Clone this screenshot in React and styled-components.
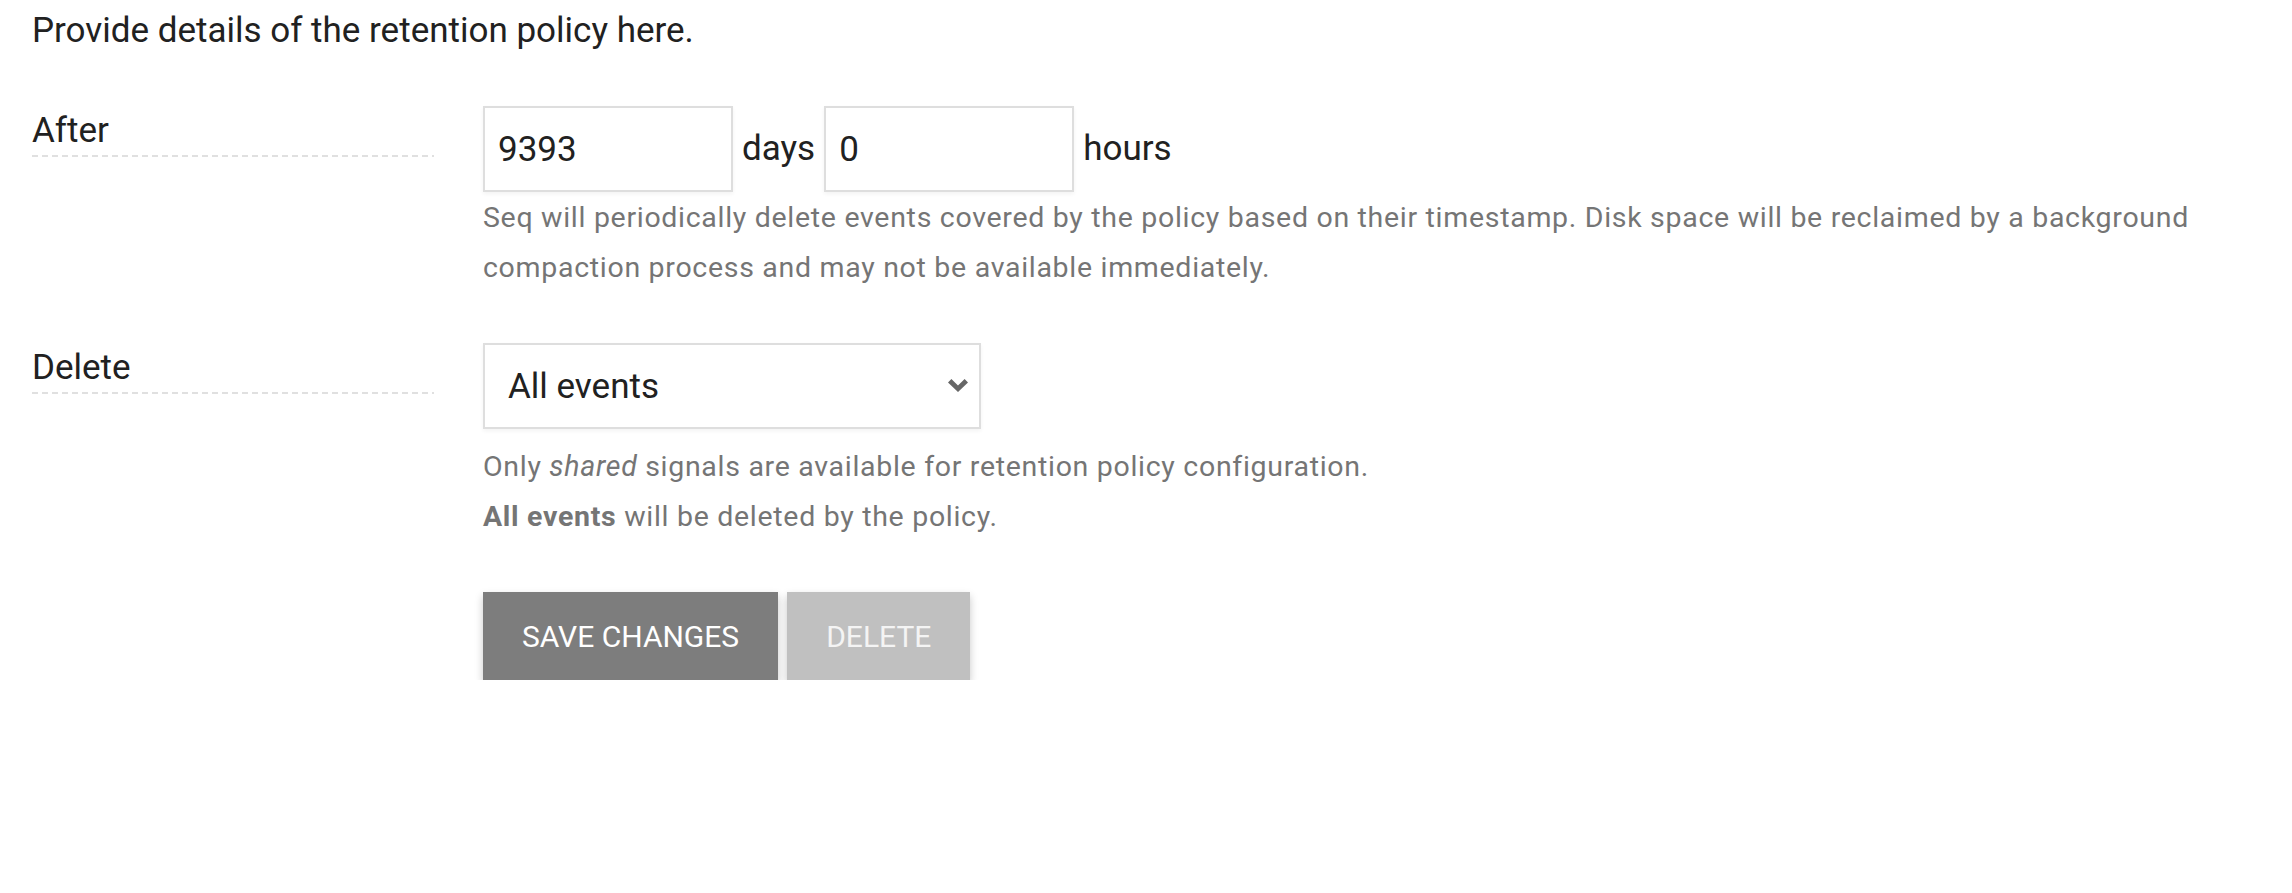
import React, { useState } from "react"
import styled, { createGlobalStyle } from "styled-components"

const GlobalStyle = createGlobalStyle`
  html, body {
    margin: 0;
    background: #fff;
  }
  body {
    font-family: Roboto, "Liberation Sans", Arial, sans-serif;
    color: #212121;
  }
`

const Page = styled.div`
  padding: 10px 32px 0;
`

const Intro = styled.p`
  margin: 0 0 54px;
  font-size: 35px;
  line-height: 42px;
`

const Form = styled.form`
  display: flex;
  flex-direction: column;
  gap: 50px;
`

const FieldRow = styled.div`
  display: grid;
  grid-template-columns: 402px 1fr;
  column-gap: 49px;
  align-items: start;
`

const Label = styled.label`
  box-sizing: border-box;
  height: 51px;
  font-size: 35px;
  line-height: 49px;
  background-image: repeating-linear-gradient(
    to right,
    #e0e0e0 0 6px,
    transparent 6px 10px
  );
  background-size: 100% 2px;
  background-position: left bottom;
  background-repeat: no-repeat;
`

const Control = styled.div`
  display: flex;
  flex-direction: column;
  min-width: 0;
`

const InputLine = styled.div`
  display: flex;
  align-items: center;
  gap: 9px;
  font-size: 35px;
`

const TextInput = styled.input`
  box-sizing: border-box;
  width: 250px;
  height: 86px;
  padding: 0 13px;
  border: 2px solid #dedede;
  border-radius: 0;
  box-shadow: 0 2px 4px rgba(0, 0, 0, 0.05);
  font-family: inherit;
  font-size: 35px;
  color: #212121;
  outline: none;
`

const Unit = styled.span`
  line-height: 42px;
`

const SelectWrap = styled.div`
  position: relative;
  width: 498px;
`

const Select = styled.select`
  box-sizing: border-box;
  width: 100%;
  height: 86px;
  padding: 0 60px 0 23px;
  border: 2px solid #dedede;
  border-radius: 0;
  background: #fff;
  box-shadow: 0 2px 4px rgba(0, 0, 0, 0.05);
  appearance: none;
  font-family: inherit;
  font-size: 35px;
  color: #212121;
  outline: none;
`

const Chevron = styled.svg`
  position: absolute;
  right: 13px;
  top: 36px;
  pointer-events: none;
`

const Help = styled.div`
  margin-top: ${p => p.$gap}px;
  font-size: 28.5px;
  line-height: 50px;
  letter-spacing: 0.7px;
  color: #757575;
  b {
    font-weight: 700;
  }
`

const Actions = styled.div`
  display: flex;
  gap: 9px;
`

const Button = styled.button`
  height: 88px;
  padding: 0 39px;
  border: none;
  border-radius: 0;
  background: ${p => (p.$disabled ? "#c0c0c0" : "#7d7d7d")};
  color: ${p => (p.$disabled ? "#f4f4f4" : "#fff")};
  box-shadow: 0 4px 8px rgba(0, 0, 0, 0.22);
  font-family: inherit;
  font-size: 30px;
  font-weight: 400;
  text-transform: uppercase;
  cursor: ${p => (p.$disabled ? "default" : "pointer")};
`

const App = () => {
  const [days, setDays] = useState("9393")
  const [hours, setHours] = useState("0")
  const [signal, setSignal] = useState("all")

  return (
    <Page>
      <GlobalStyle />
      <Intro>Provide details of the retention policy here.</Intro>
      <Form onSubmit={e => e.preventDefault()}>
        <FieldRow>
          <Label>After</Label>
          <Control>
            <InputLine>
              <TextInput value={days} onChange={e => setDays(e.target.value)} />
              <Unit>days</Unit>
              <TextInput value={hours} onChange={e => setHours(e.target.value)} />
              <Unit>hours</Unit>
            </InputLine>
            <Help $gap={1}>
              Seq will periodically delete events covered by the policy based on
              their timestamp. Disk space will be reclaimed by a background
              compaction process and may not be available immediately.
            </Help>
          </Control>
        </FieldRow>

        <FieldRow>
          <Label>Delete</Label>
          <Control>
            <SelectWrap>
              <Select value={signal} onChange={e => setSignal(e.target.value)}>
                <option value="all">All events</option>
              </Select>
              <Chevron width="20" height="13" viewBox="0 0 20 13">
                <polygon points="0,3.4 3.4,0 10,6.4 16.6,0 20,3.4 10,13" fill="#666" />
              </Chevron>
            </SelectWrap>
            <Help $gap={13}>
              Only <i>shared</i> signals are available for retention policy
              configuration.
              <br />
              <b>All events</b> will be deleted by the policy.
            </Help>
          </Control>
        </FieldRow>

        <FieldRow>
          <span />
          <Actions>
            <Button type="submit">Save changes</Button>
            <Button type="button" $disabled>
              Delete
            </Button>
          </Actions>
        </FieldRow>
      </Form>
    </Page>
  )
}

export default App
